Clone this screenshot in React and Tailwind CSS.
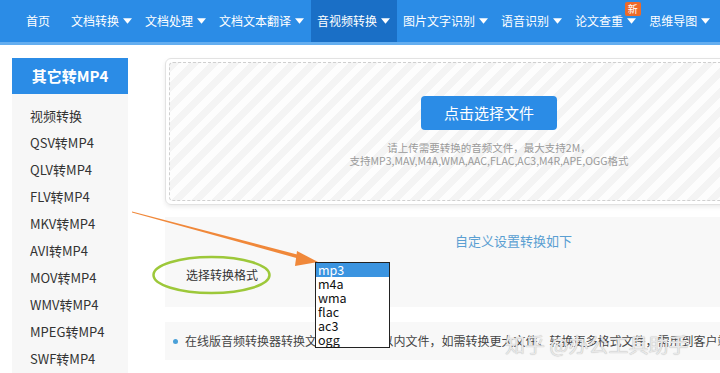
import React from 'react'

const FONT = { fontFamily: '"Noto Sans CJK SC", "Noto Sans", sans-serif' }

const nav = [
  { label: '文档转换' },
  { label: '文档处理' },
  { label: '文档文本翻译' },
  { label: '音视频转换', active: true },
  { label: '图片文字识别' },
  { label: '语音识别' },
  { label: '论文查重', badge: true },
  { label: '思维导图' },
]

const side = ['视频转换', 'QSV转MP4', 'QLV转MP4', 'FLV转MP4', 'MKV转MP4', 'AVI转MP4', 'MOV转MP4', 'WMV转MP4', 'MPEG转MP4', 'SWF转MP4']

const formats = ['mp3', 'm4a', 'wma', 'flac', 'ac3', 'ogg']

function Caret() {
  return (
    <svg width="9" height="6" viewBox="0 0 10 6" className="ml-[4px] shrink-0">
      <path d="M0 0h10L5 6z" fill="#fff" />
    </svg>
  )
}

export default function App() {
  return (
    <div className="relative w-[720px] h-[373px] overflow-hidden bg-white" style={FONT}>
      {/* top nav */}
      <div className="h-[45px] bg-[#2b8ce6] border-b-[3px] border-[#64aef0] flex items-stretch text-[12px] text-white whitespace-nowrap">
        <div className="shrink-0 flex items-center pl-[26px] pr-[14.5px]">首页</div>
        {nav.map((n) => (
          <div
            key={n.label}
            className={`relative shrink-0 flex items-center px-[6.5px] ${n.active ? 'bg-[#1a6fc6]' : ''}`}
          >
            {n.label}
            <Caret />
            {n.badge && (
              <span className="absolute top-[2px] right-[2px] h-[14px] w-[16px] rounded-[2px] bg-[#ec6a2a] text-[10px] leading-[14px] text-center">新</span>
            )}
          </div>
        ))}
      </div>

      <div className="flex pt-[13px]">
        {/* sidebar */}
        <div className="ml-[12px] w-[116px] shrink-0">
          <div className="h-[36px] bg-[#2b8ce6] text-white font-bold text-[15px] flex items-center justify-center">其它转MP4</div>
          <div className="bg-[#f7f7f7] pt-[8px] pb-[10px]">
            {side.map((s) => (
              <div key={s} className="h-[27px] flex items-center pl-[18px] text-[13px] text-[#333]">{s}</div>
            ))}
          </div>
        </div>

        {/* main */}
        <div className="ml-[37px] w-[648px] shrink-0">
          <div className="h-[147px] rounded-[6px] border border-[#e2e2e2] shadow-[0_2px_4px_rgba(0,0,0,0.08)] p-[3px]">
            <div className="h-full rounded-[4px] border border-dashed border-[#cfcfcf] bg-[repeating-linear-gradient(135deg,#f4f4f4_0,#f4f4f4_7px,#fdfdfd_7px,#fdfdfd_14px)] flex flex-col items-center pt-[33px]">
              <div className="w-[136px] h-[34px] rounded-[4px] bg-[#2b8ce6] text-white text-[15px] flex items-center justify-center">点击选择文件</div>
              <div className="mt-[11px] text-[10.5px] leading-[13px] text-[#9a9a9a] text-center">
                <div>请上传需要转换的音频文件，最大支持2M，</div>
                <div>支持MP3,MAV,M4A,WMA,AAC,FLAC,AC3,M4R,APE,OGG格式</div>
              </div>
            </div>
          </div>

          <div className="mt-[12px] h-[90px] bg-[#f8f8f8] pt-[15px]">
            <div className="pl-[290px] text-[13px] text-[#5a9fd2] leading-[18px]">自定义设置转换如下</div>
            <div className="pl-[21px] mt-[17px] text-[12px] text-[#333] leading-[16px]">选择转换格式</div>
          </div>

          <div className="mt-[15px] h-[38px] bg-[#f8f8f8] flex items-center pl-[8px] text-[12px] text-[#444]">
            <span className="w-[5px] h-[5px] rounded-full bg-[#4aa0d8] mr-[7px] shrink-0" />
            <span className="whitespace-nowrap">在线版音频转换器转换文件限制在2M以内文件，如需转换更大文件、转换更多格式文件，需用到客户端版会</span>
          </div>
        </div>
      </div>

      {/* annotation overlay */}
      <svg className="absolute left-0 top-0 pointer-events-none" width="720" height="373">
        <ellipse cx="211.5" cy="275" rx="58" ry="18" fill="none" stroke="#9dc83a" strokeWidth="2.5" />
        <polygon points="132,211.5 301,255.5 300,259 132,212.5" fill="#f0883a" />
        <polygon points="297,251 318,262 295,266" fill="#f0883a" />
      </svg>

      {/* select dropdown */}
      <div className="absolute left-[315px] top-[262px] w-[75px] border border-[#222] bg-white text-[12.5px] text-[#111]">
        {formats.map((f, i) => (
          <div key={f} className={`h-[14px] leading-[14px] pl-[2px] ${i === 0 ? 'bg-[#3b94e0] text-white' : ''}`}>{f}</div>
        ))}
      </div>

      {/* watermark */}
      <div className="absolute left-[505px] top-[332px] text-[20px] leading-[26px] text-[#e8e8e8] whitespace-nowrap [text-shadow:0_0_1px_#aaa]">知乎 @办公工具助手</div>
    </div>
  )
}
